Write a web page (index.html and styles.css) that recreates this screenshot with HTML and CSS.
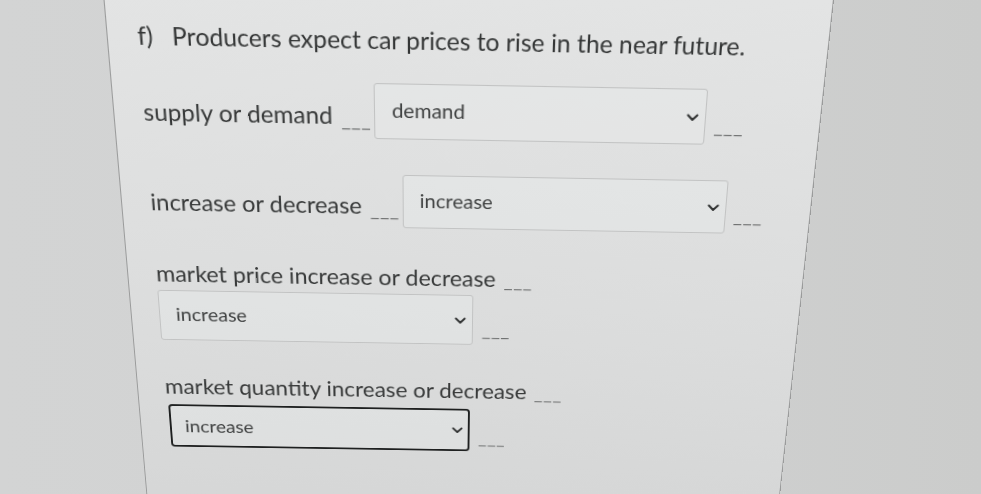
FILE: index.html
```html
<!DOCTYPE html>
<html lang="en">
<head>
<meta charset="utf-8">
<title>Question f</title>
<link rel="stylesheet" href="styles.css">
</head>
<body>
<main class="sheet">
  <section class="card">
    <h2 class="prompt"><span class="tag">f)</span><span>Producers expect car prices to rise in the near future.</span></h2>

    <div class="field">
      <span class="label">supply or demand</span>
      <span class="blank">___</span>
      <div class="picker">
        <span class="picker-value">demand</span>
        <svg class="chev" viewBox="0 0 12 8" width="12" height="8"><polyline points="1.5,1.5 6,6 10.5,1.5"/></svg>
      </div>
      <span class="blank">___</span>
    </div>

    <div class="field field-second">
      <span class="label">increase or decrease</span>
      <span class="blank">___</span>
      <div class="picker">
        <span class="picker-value">increase</span>
        <svg class="chev" viewBox="0 0 12 8" width="12" height="8"><polyline points="1.5,1.5 6,6 10.5,1.5"/></svg>
      </div>
      <span class="blank">___</span>
    </div>

    <div class="stacked">
      <div class="question">
        <span class="label">market price increase or decrease</span>
        <span class="blank">___</span>
      </div>
      <div class="answer">
        <div class="picker">
          <span class="picker-value">increase</span>
          <svg class="chev" viewBox="0 0 12 8" width="12" height="8"><polyline points="1.5,1.5 6,6 10.5,1.5"/></svg>
        </div>
        <span class="blank">___</span>
      </div>
    </div>

    <div class="stacked">
      <div class="question">
        <span class="label">market quantity increase or decrease</span>
        <span class="blank">___</span>
      </div>
      <div class="answer answer-focused">
        <div class="picker is-focused">
          <span class="picker-value">increase</span>
          <svg class="chev" viewBox="0 0 12 8" width="12" height="8"><polyline points="1.5,1.5 6,6 10.5,1.5"/></svg>
        </div>
        <span class="blank">___</span>
      </div>
    </div>
  </section>
</main>
</body>
</html>
```

FILE: styles.css
```css
html,
body {
  margin: 0;
  height: 100%;
  overflow: hidden;
}

body {
  background: linear-gradient(90deg, #d3d4d4 0%, #d0d1d1 60%, #cbcccb 100%);
  font-family: Lato, "Open Sans", sans-serif;
  color: #383a3a;
}

/* the page, seen at an angle: tilted back and turned a touch */
.sheet {
  display: block;
  width: 981px;
  height: 560px;
  transform-origin: 490.5px 247px;
  transform: perspective(1000px) rotateX(-16deg) rotate(1deg);
}

.card {
  box-sizing: border-box;
  margin-left: 125px;
  width: 682px;
  height: 100%;
  padding: 31px 0 0 28px;
  border-left: 1px solid #9a9b9b;
  border-right: 1px solid #9a9b9b;
  background: linear-gradient(180deg, #e3e4e4 0%, #dcdddd 55%, #d5d6d6 100%);
}

.prompt {
  display: flex;
  margin: 0;
  font-size: 23.4px;
  line-height: 29px;
  font-weight: 400;
  color: #343636;
}

.prompt .tag {
  margin-right: 18px;
}

/* label, blank and dropdown on one line */
.field {
  display: flex;
  align-items: flex-end;
  margin-top: 26px;
}

.field-second {
  margin-top: 35px;
}

.label {
  font-size: 23.4px;
  line-height: 29px;
  white-space: nowrap;
}

.field > .label {
  margin-bottom: 8px;
}

.blank {
  margin-left: 8px;
  font-size: 20px;
  line-height: 24px;
  letter-spacing: 0.5px;
  color: #6f7171;
  white-space: nowrap;
}

.field > .blank {
  margin-bottom: 8px;
}

.field > .picker {
  margin-left: 3px;
}

/* label on its own line, dropdown below */
.stacked {
  margin-top: 37px;
}

.question {
  display: flex;
  align-items: baseline;
}

.answer {
  display: flex;
  align-items: flex-end;
  margin-top: 3px;
}

.answer > .blank {
  margin-left: 9px;
  margin-bottom: 6px;
}

.answer-focused {
  margin-top: 6px;
}

.answer-focused > .blank {
  margin-bottom: 5px;
}

.picker {
  box-sizing: border-box;
  display: flex;
  align-items: flex-start;
  width: 320px;
  height: 54px;
  padding: 0 6px 0 16px;
  border: 1px solid #c2c3c3;
  border-radius: 3px;
  background: rgba(236, 237, 237, 0.35);
}

.picker-value {
  margin-top: 12px;
  font-size: 20px;
  line-height: 24px;
  color: #404242;
}

.chev {
  margin-left: auto;
  margin-top: 1px;
  align-self: center;
  fill: none;
  stroke: #2f3131;
  stroke-width: 2;
  stroke-linecap: round;
  stroke-linejoin: round;
}

.picker.is-focused {
  width: 316px;
  height: 49px;
  margin-left: 2px;
  padding: 0 5px 0 14px;
  border: 2px solid #1e2020;
  border-radius: 4px;
}

.picker.is-focused .picker-value {
  margin-top: 10px;
}
```
